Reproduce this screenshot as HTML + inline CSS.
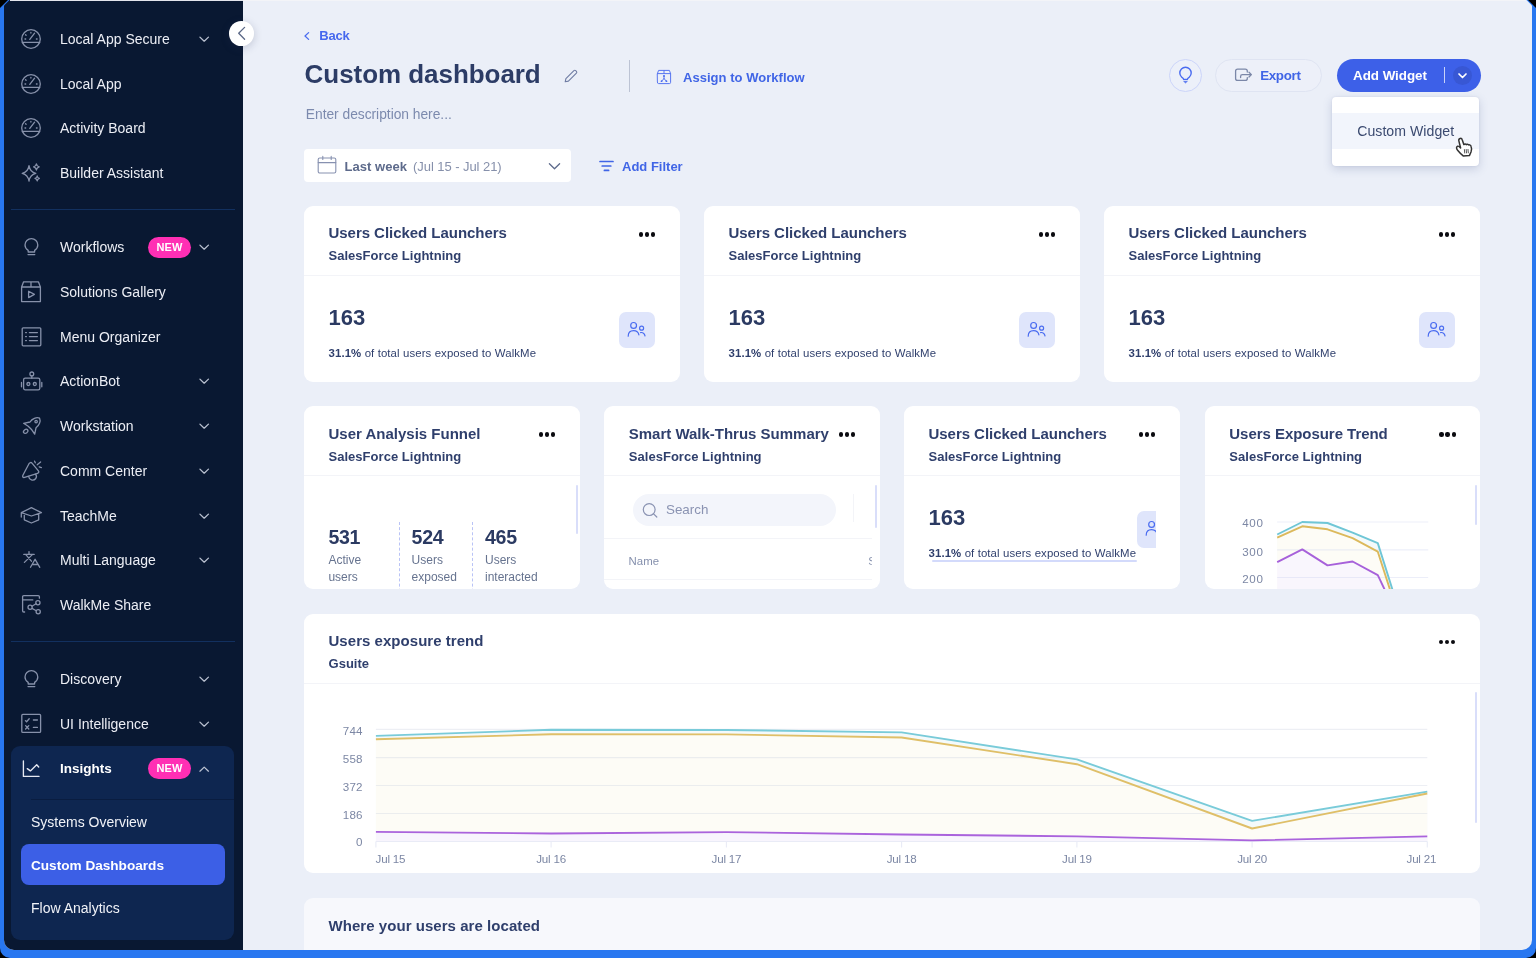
<!DOCTYPE html>
<html>
<head>
<meta charset="utf-8">
<title>Custom dashboard</title>
<style>
*{box-sizing:border-box;margin:0;padding:0}
html,body{width:1536px;height:958px;overflow:hidden;background:#000}
body{font-family:"Liberation Sans",sans-serif;color:#2f3d64;position:relative}
.abs{position:absolute}
#frame{position:absolute;left:0;top:0;width:1536px;height:958px;background:#2877f0;border-radius:0 0 10px 10px;overflow:hidden;clip-path:polygon(8px 0,1528px 0,1536px 8px,1536px 958px,0 958px,0 8px)}
#app{will-change:transform;position:absolute;left:4px;top:0;width:1528px;height:950px;background:#ebeff8;border-radius:0 0 10px 10px;overflow:hidden;clip-path:polygon(5.5px 0,1522.5px 0,1528px 5.5px,1528px 950px,0 950px,0 5.5px)}
#topline{position:absolute;left:6px;top:0;width:1516px;height:1.2px;background:linear-gradient(90deg,#e3e5ec 0,#e3e5ec 233px,#f3f4f8 233px);z-index:50}
/* coordinates inside #app are page-x minus 4 */
#side{position:absolute;left:0;top:0;width:239px;height:950px;background:#091832}
.nav{position:absolute;left:0;width:239px;height:24px;color:#eceef5;font-size:14px;line-height:24px;white-space:nowrap}
.nav .ic{position:absolute;left:16px;top:1px;width:22px;height:22px}
.nav .tx{position:absolute;left:56px;top:0}
.nav .chev{position:absolute;left:195px;top:9px;width:10px;height:7px}
.ic svg,.chev svg{display:block;overflow:visible}
.ic svg *{fill:none;stroke:#8791aa;stroke-width:1.3;stroke-linecap:round;stroke-linejoin:round}
.chev svg *{fill:none;stroke:#b9c0d0;stroke-width:1.4;stroke-linecap:round;stroke-linejoin:round}
.ic.wh svg *{stroke:#e6e9f2;stroke-width:1.35}
.badge{position:absolute;height:21px;width:43px;border-radius:11px;background:#ff2fb4;color:#fff;font-size:11px;font-weight:700;line-height:21px;text-align:center;letter-spacing:.1px}
.sdiv{position:absolute;left:7px;width:224px;height:1px;background:#12305f}
#ins{position:absolute;left:7px;top:745.6px;width:223.4px;height:194.4px;border-radius:9px;background:#0e2650}
.sub{position:absolute;left:27px;color:#f1f3f8;font-size:14px;line-height:20px;white-space:nowrap}
#main{position:absolute;left:-4px;top:0;width:1536px;height:958px}
.blue{color:#3b5bdb}
.card{position:absolute;background:#fff;border-radius:9px;overflow:hidden}
.card .hd{position:absolute;left:0;top:0;right:0;height:70px;border-bottom:1px solid #f1f2f6}
.card .t1{position:absolute;left:24px;top:17px;font-size:15px;font-weight:700;line-height:20px;white-space:nowrap;color:#2f3d64}
.card .t2{position:absolute;left:24px;top:40px;font-size:13px;font-weight:700;line-height:18px;white-space:nowrap;color:#2f3d64}
.dots{position:absolute;top:25px;width:17px;height:5px}
.dots i{position:absolute;top:0;width:4.4px;height:4.4px;border-radius:50%;background:#0b0b10}
.big{position:absolute;font-size:22px;font-weight:700;line-height:26px;color:#2b3a62;letter-spacing:-.2px}
.small{position:absolute;font-size:11.4px;line-height:14px;color:#2f3d64;white-space:nowrap}
.ubox{position:absolute;width:36px;height:36px;border-radius:7px;background:#dfe5fb}
.sb{position:absolute;width:2px;background:#d9defa;border-radius:1px}
</style>
</head>
<body>
<div id="frame">
<div id="app">
<div id="topline"></div>

<svg width="0" height="0" style="position:absolute">
<defs>
<g id="i-gauge"><circle cx="11" cy="11" r="9.3"/><path d="M2.4 14.4H19.6M9.8 11.4L14.6 5.2"/><path d="M5.6 6.7l.5.5M10.9 4.3v.7M5 11h.7M16.4 11h.7" /></g>
<g id="i-spark"><path d="M9 3.6C9.7 8 11.4 10.4 15.8 11.4C11.4 12.4 9.7 14.8 9 19.2C8.3 14.8 6.6 12.4 2.2 11.4C6.6 10.4 8.3 8 9 3.6Z"/><path d="M16.4 1.8C16.7 3.5 17.4 4.4 19.2 4.9C17.4 5.4 16.7 6.3 16.4 8C16.1 6.3 15.4 5.4 13.6 4.9C15.4 4.4 16.1 3.5 16.4 1.8Z"/><path d="M17.2 14C17.4 15.3 18 16 19.4 16.4C18 16.8 17.4 17.5 17.2 18.8C17 17.5 16.4 16.8 15 16.4C16.4 16 17 15.3 17.2 14Z"/></g>
<g id="i-bulb"><path d="M8.2 16V14.4C6.2 13.2 5 11.3 5 9.1A6.4 6.4 0 0 1 17.8 9.1C17.8 11.3 16.6 13.2 14.6 14.4V16Z"/><path d="M8 18.6H14.8"/></g>
<g id="i-box"><path d="M1.6 6H20.4V20.6H1.6ZM1.6 6L3.6 .8H18.4L20.4 6M11 .8V6M8.6 10.2V16.6L14.4 13.4Z"/></g>
<g id="i-list"><rect x="2.2" y="1.8" width="18.6" height="18" rx="1"/><path d="M9.4 6.6H17.4M9.4 10.6H17.4M9.4 14.6H17.4"/><path d="M5.6 6.6h.8M5.6 10.6h.8M5.6 14.6h.8"/></g>
<g id="i-bot"><rect x="3.6" y="8.2" width="16.2" height="11.6" rx="1.6"/><circle cx="11.8" cy="3.9" r="1.9"/><path d="M11.8 5.8V8.2M1.5 12.4V16.8M21.8 12.4V16.8"/><circle cx="8.4" cy="14" r="1.5"/><circle cx="14.8" cy="14" r="1.5"/></g>
<g id="i-rocket"><path d="M19.6 3.2C21 6.2 19.2 10.6 16 12.8L14.7 19.2L11.8 14.8L8.2 11.2L3.6 8.3L10 7C12 3.6 16.6 1.8 19.6 3.2Z"/><circle cx="16.1" cy="6.6" r="1.2"/><ellipse cx="5.7" cy="16.3" rx="2.4" ry="1.8" transform="rotate(-40 5.7 16.3)"/></g>
<g id="i-bell"><path d="M9.1 3.5C9.7 2.3 11.2 2.2 12 3.2L18.4 10.9C19.2 11.9 18.8 12.9 17.6 13.3L4.6 17.4C3 17.9 2.2 16.7 2.9 15.3Z"/><path d="M8.6 16.4C9.2 20 13.2 21.4 15.6 18.8C16.6 17.6 16.6 15.6 15.6 14.2"/><path d="M14.6 1.2L15.3 2.8M17.2 4.8L20.6 2M19.2 6.8L21.4 7.6"/></g>
<g id="i-cap"><path d="M11.4 2.7L21.4 7.7L11.4 11L1.3 7.7ZM4.3 8.8V14.8L11.4 18L18.7 14.8V8.8M1.3 7.7V12"/></g>
<g id="i-lang"><path d="M3.8 5.4H14.2M9 2.6V5.4M12.6 5.4L4.4 13.4M5.8 5.6L11.4 12.2"/><path d="M10.5 18.3L15.1 10.3L19.8 18.3M12.2 15.5H18"/></g>
<g id="i-share"><path d="M19.4 4.2V2.8Q19.4 1.6 18.2 1.6H3.8Q2.6 1.6 2.6 2.8V16.8Q2.6 18 3.8 18H4.6M2.6 5.9H12.8"/><circle cx="17.9" cy="8.7" r="2.1"/><circle cx="10.1" cy="13.3" r="2.1"/><circle cx="18.2" cy="17.7" r="2.1"/><path d="M12 12.2L16 9.8M12 14.4L16.3 16.7"/></g>
<g id="i-ui"><rect x="1.8" y="1.4" width="18.8" height="18" rx="1"/><path d="M5.4 7.6L6.6 8.8L9.2 5.8M13.4 7H17.4M5.6 12.6L8.8 16M8.8 12.6L5.6 16M13.4 14.4H17.4"/></g>
<g id="i-ins"><path d="M3.4 2.8V18.4H19M7.3 10.6L10.4 12.9L16.7 6.7L18.7 9"/></g>
<g id="i-cd"><path d="M1 1.2L5.6 5.6L10.2 1.2"/></g>
<g id="i-cu"><path d="M1 5.6L5.6 1.2L10.2 5.6"/></g>
</defs>
</svg>
<!-- SIDEBAR -->
<div id="side">
<div class="sdiv" style="top:209px"></div>
<div class="sdiv" style="top:641px"></div>
<div class="nav" style="top:27px"><span class="ic"><svg width="22" height="22" viewBox="0 0 22 22"><use href="#i-gauge"/></svg></span><span class="tx">Local App Secure</span><span class="chev"><svg width="10.4" height="6.3" viewBox="0 0 11.2 6.8"><use href="#i-cd"/></svg></span></div>
<div class="nav" style="top:71.7px"><span class="ic"><svg width="22" height="22" viewBox="0 0 22 22"><use href="#i-gauge"/></svg></span><span class="tx">Local App</span></div>
<div class="nav" style="top:116.3px"><span class="ic"><svg width="22" height="22" viewBox="0 0 22 22"><use href="#i-gauge"/></svg></span><span class="tx">Activity Board</span></div>
<div class="nav" style="top:161px"><span class="ic"><svg width="22" height="22" viewBox="0 0 22 22"><use href="#i-spark"/></svg></span><span class="tx">Builder Assistant</span></div>
<div class="nav" style="top:235px"><span class="ic"><svg width="22" height="22" viewBox="0 0 22 22"><use href="#i-bulb"/></svg></span><span class="tx">Workflows</span><span class="badge" style="left:144px;top:1.5px">NEW</span><span class="chev"><svg width="10.4" height="6.3" viewBox="0 0 11.2 6.8"><use href="#i-cd"/></svg></span></div>
<div class="nav" style="top:279.75px"><span class="ic"><svg width="22" height="22" viewBox="0 0 22 22"><use href="#i-box"/></svg></span><span class="tx">Solutions Gallery</span></div>
<div class="nav" style="top:324.5px"><span class="ic"><svg width="22" height="22" viewBox="0 0 22 22"><use href="#i-list"/></svg></span><span class="tx">Menu Organizer</span></div>
<div class="nav" style="top:369.25px"><span class="ic"><svg width="22" height="22" viewBox="0 0 22 22"><use href="#i-bot"/></svg></span><span class="tx">ActionBot</span><span class="chev"><svg width="10.4" height="6.3" viewBox="0 0 11.2 6.8"><use href="#i-cd"/></svg></span></div>
<div class="nav" style="top:414px"><span class="ic"><svg width="22" height="22" viewBox="0 0 22 22"><use href="#i-rocket"/></svg></span><span class="tx">Workstation</span><span class="chev"><svg width="10.4" height="6.3" viewBox="0 0 11.2 6.8"><use href="#i-cd"/></svg></span></div>
<div class="nav" style="top:458.75px"><span class="ic"><svg width="22" height="22" viewBox="0 0 22 22"><use href="#i-bell"/></svg></span><span class="tx">Comm Center</span><span class="chev"><svg width="10.4" height="6.3" viewBox="0 0 11.2 6.8"><use href="#i-cd"/></svg></span></div>
<div class="nav" style="top:503.5px"><span class="ic"><svg width="22" height="22" viewBox="0 0 22 22"><use href="#i-cap"/></svg></span><span class="tx">TeachMe</span><span class="chev"><svg width="10.4" height="6.3" viewBox="0 0 11.2 6.8"><use href="#i-cd"/></svg></span></div>
<div class="nav" style="top:548.25px"><span class="ic"><svg width="22" height="22" viewBox="0 0 22 22"><use href="#i-lang"/></svg></span><span class="tx">Multi Language</span><span class="chev"><svg width="10.4" height="6.3" viewBox="0 0 11.2 6.8"><use href="#i-cd"/></svg></span></div>
<div class="nav" style="top:593px"><span class="ic"><svg width="22" height="22" viewBox="0 0 22 22"><use href="#i-share"/></svg></span><span class="tx">WalkMe Share</span></div>
<div class="nav" style="top:667px"><span class="ic"><svg width="22" height="22" viewBox="0 0 22 22"><use href="#i-bulb"/></svg></span><span class="tx">Discovery</span><span class="chev"><svg width="10.4" height="6.3" viewBox="0 0 11.2 6.8"><use href="#i-cd"/></svg></span></div>
<div class="nav" style="top:711.75px"><span class="ic"><svg width="22" height="22" viewBox="0 0 22 22"><use href="#i-ui"/></svg></span><span class="tx">UI Intelligence</span><span class="chev"><svg width="10.4" height="6.3" viewBox="0 0 11.2 6.8"><use href="#i-cd"/></svg></span></div><div id="ins">
  <div class="abs" style="left:20px;top:53px;width:203.4px;height:1.2px;background:#0a1d40"></div>
  <div class="abs" style="left:10px;top:98.6px;width:204px;height:40.6px;border-radius:8px;background:#3c5fe6"></div>
</div>
<div class="nav" style="top:756.5px;font-weight:700;color:#fff;font-size:13.5px"><span class="ic wh"><svg width="22" height="22" viewBox="0 0 22 22"><use href="#i-ins"/></svg></span><span class="tx">Insights</span><span class="badge" style="left:144px;top:1.5px">NEW</span><span class="chev"><svg width="10.4" height="6.3" viewBox="0 0 11.2 6.8"><use href="#i-cu"/></svg></span></div>
<div class="sub" style="top:812px">Systems Overview</div>
<div class="sub" style="top:855.7px;font-weight:700;color:#fff;font-size:13.6px">Custom Dashboards</div>
<div class="sub" style="top:898px">Flow Analytics</div>
</div>
<!-- collapse button -->
<div class="abs" style="left:225.1px;top:21.3px;width:24.6px;height:24.6px;border-radius:50%;background:#fff;box-shadow:0 2px 8px rgba(40,50,90,.22);z-index:20">
<svg width="24.6" height="24.6" viewBox="0 0 24.6 24.6" style="display:block"><path d="M15.6 6.4L9.7 12.3L15.6 18.2" fill="none" stroke="#5a6786" stroke-width="1.3" stroke-linecap="round" stroke-linejoin="round"/></svg>
</div>
<!-- MAIN -->
<div id="main">
<svg class="abs" style="left:303px;top:30.6px" width="8" height="10" viewBox="0 0 8 10"><path d="M5.6 1.6L2 5L5.6 8.4" fill="none" stroke="#4a6cf0" stroke-width="1.3" stroke-linecap="round" stroke-linejoin="round"/></svg>
<div class="abs" style="left:319.3px;top:26.60px;font-size:13px;line-height:17px;font-weight:700;color:#4668ee;white-space:nowrap;letter-spacing:-0.25px">Back</div>
<div class="abs" style="left:304.6px;top:58.49px;font-size:26px;line-height:32px;font-weight:700;color:#2c3c66;white-space:nowrap;letter-spacing:-0.05px">Custom dashboard</div>
<svg class="abs" style="left:563px;top:68px" width="16" height="16" viewBox="0 0 16 16"><path d="M2.2 13.8L2.9 10.6L10.9 2.6Q11.8 1.8 12.7 2.6L13.4 3.3Q14.2 4.2 13.4 5.1L5.4 13.1Z" fill="none" stroke="#6f7ca3" stroke-width="1.1" stroke-linejoin="round"/></svg>
<div class="abs" style="left:629px;top:60px;width:1px;height:32px;background:#bcc3d4"></div>
<svg class="abs" style="left:656px;top:69px" width="16" height="16" viewBox="0 0 16 16"><g fill="none" stroke="#5876f0" stroke-width="1" stroke-linejoin="round" stroke-linecap="round"><path d="M1.4 4.6L2.6 1.4H13.4L14.6 4.6V13.4Q14.6 14.6 13.4 14.6H2.6Q1.4 14.6 1.4 13.4ZM1.4 4.6H14.6M8 1.4V4.6"/><path d="M8 7V9.6M8 9.6L5.6 12.2M8 9.6L10.4 12.2"/></g><circle cx="8" cy="7" r="1" fill="#4a6cf0"/><circle cx="5.6" cy="12.2" r=".9" fill="#4a6cf0"/><circle cx="10.4" cy="12.2" r=".9" fill="#4a6cf0"/></svg>
<div class="abs" style="left:683px;top:69.00px;font-size:13px;line-height:17px;font-weight:700;color:#4065e6;white-space:nowrap;letter-spacing:0.03px">Assign to Workflow</div>
<div class="abs" style="left:305.8px;top:105.82px;font-size:13.8px;line-height:18px;font-weight:400;color:#7c8aae;white-space:nowrap;letter-spacing:-0.02px">Enter description here...</div>
<div class="abs" style="left:304px;top:149px;width:267px;height:33px;border-radius:4px;background:#fff"></div>
<svg class="abs" style="left:317px;top:155px" width="20" height="20" viewBox="0 0 20 20"><g fill="none" stroke="#8791b0" stroke-width="1.1" stroke-linecap="round"><rect x="1.2" y="3" width="17.6" height="15" rx="1.6"/><path d="M1.2 7.6H18.8M5.8 1.4V4.4M14.2 1.4V4.4"/></g></svg>
<div class="abs" style="left:344.6px;top:157.60px;font-size:13px;line-height:17px;font-weight:700;color:#5d6a8b;white-space:nowrap;letter-spacing:0.03px">Last week</div>
<div class="abs" style="left:413px;top:157.60px;font-size:13px;line-height:17px;font-weight:400;color:#8690ab;white-space:nowrap;letter-spacing:-0.06px">(Jul 15 - Jul 21)</div>
<svg class="abs" style="left:548px;top:162px" width="13" height="9" viewBox="0 0 13 9"><path d="M1.4 1.8L6.5 6.8L11.6 1.8" fill="none" stroke="#5d6a8b" stroke-width="1.3" stroke-linecap="round" stroke-linejoin="round"/></svg>
<svg class="abs" style="left:599px;top:159px" width="15" height="14" viewBox="0 0 15 14"><path d="M1 2.5H14M3.2 7H11.8M5.4 11.4H9.6" fill="none" stroke="#4065e6" stroke-width="1.7" stroke-linecap="round"/></svg>
<div class="abs" style="left:622px;top:157.60px;font-size:13px;line-height:17px;font-weight:700;color:#4065e6;white-space:nowrap;letter-spacing:0.0px">Add Filter</div>
<div class="abs" style="left:1169px;top:59px;width:33px;height:33px;border-radius:50%;border:1px solid #ccd5fa;background:#ecf0f9"></div>
<svg class="abs" style="left:1176px;top:65px" width="19" height="20" viewBox="0 0 19 20"><path d="M7.7 14.4C7.3 13.4 6.5 12.9 5.6 12.1A5.7 5.7 0 1 1 13.4 12.1C12.5 12.9 11.7 13.4 11.3 14.4Z" fill="none" stroke="#4a6cf0" stroke-width="1.4" stroke-linejoin="round"/><path d="M7.5 16.2H11.5L9.5 18.1Z" fill="#4a6cf0" stroke="#4a6cf0" stroke-width=".5" stroke-linejoin="round"/></svg>
<div class="abs" style="left:1214.5px;top:59px;width:107px;height:32.5px;border-radius:17px;border:1px solid #dfe4f2;background:#edf0f9"></div>
<svg class="abs" style="left:1234px;top:66px" width="19" height="18" viewBox="0 0 19 18"><g fill="none" stroke="#7b87a8" stroke-width="1.3" stroke-linecap="round" stroke-linejoin="round"><path d="M13.3 6V5.2Q13.3 3.2 11.3 3.2H3.6Q1.6 3.2 1.6 5.2V12.4Q1.6 14.4 3.6 14.4H11.3Q13.3 14.4 13.3 12.4V11.6"/><path d="M6.6 11.6V10.4Q6.6 8.6 8.4 8.6H17.2M15 6.2L17.4 8.6L15 11"/></g></svg>
<div class="abs" style="left:1260.2px;top:67.06px;font-size:13.4px;line-height:17px;font-weight:700;color:#4065e6;white-space:nowrap;letter-spacing:-0.35px">Export</div>
<div class="abs" style="left:1337px;top:59px;width:143.5px;height:32.5px;border-radius:17px;background:#3d60e8"></div>
<div class="abs" style="left:1353px;top:67.26px;font-size:13.4px;line-height:17px;font-weight:700;color:#fff;white-space:nowrap;letter-spacing:-0.03px">Add Widget</div>
<div class="abs" style="left:1443.5px;top:67px;width:1px;height:16px;background:#c8d2f8"></div>
<div class="abs" style="left:1452.5px;top:65.5px;width:19px;height:19px;border-radius:50%;background:#3857d4"></div>
<svg class="abs" style="left:1456.5px;top:71.5px" width="11" height="8" viewBox="0 0 11 8"><path d="M2 2L5.5 5.5L9 2" fill="none" stroke="#fff" stroke-width="1.7" stroke-linecap="round" stroke-linejoin="round"/></svg>
<div class="card" style="left:304px;top:206.2px;width:375.5px;height:175.5px;background:#fff">
<div class="abs" style="left:24.5px;top:17.00px;font-size:15px;line-height:20px;font-weight:700;color:#2f3f6c;white-space:nowrap;letter-spacing:-0.04px">Users Clicked Launchers</div>
<div class="abs" style="left:24.5px;top:41.20px;font-size:13px;line-height:18px;font-weight:700;color:#2f3f6c;white-space:nowrap;letter-spacing:0.03px">SalesForce Lightning</div>
<div class="abs" style="left:0;top:69px;width:100%;height:1px;background:#f3f4f8"></div>
<div class="dots" style="left:334.5px;top:26.2px"><i style="left:0"></i><i style="left:6.1px"></i><i style="left:12.2px"></i></div>
<div class="abs" style="left:24.5px;top:98.88px;font-size:22px;line-height:26px;font-weight:700;color:#2b3a62;white-space:nowrap;letter-spacing:0px">163</div>
<div class="abs" style="left:24.5px;top:139.95px;font-size:11.4px;line-height:14px;font-weight:400;color:#2f3f6c;white-space:nowrap;letter-spacing:0.11px"><b>31.1%</b> of total users exposed to WalkMe</div>
<div class="ubox" style="left:315px;top:105.5px"><svg width="36" height="36" viewBox="0 0 36 36" style="display:block"><g fill="none" stroke="#4a6cf0" stroke-width="1.2" stroke-linecap="round"><circle cx="14.6" cy="13.4" r="2.9"/><path d="M9.2 24.2C9.2 20.8 11.4 18.6 14.6 18.6C17.4 18.6 19.4 20.2 19.9 22.8"/><circle cx="22.6" cy="16.2" r="2"/><path d="M21.6 20.6C23.8 20.2 25.6 21.4 26 23.8"/></g></svg></div>
</div>
<div class="card" style="left:704px;top:206.2px;width:375.5px;height:175.5px;background:#fff">
<div class="abs" style="left:24.5px;top:17.00px;font-size:15px;line-height:20px;font-weight:700;color:#2f3f6c;white-space:nowrap;letter-spacing:-0.04px">Users Clicked Launchers</div>
<div class="abs" style="left:24.5px;top:41.20px;font-size:13px;line-height:18px;font-weight:700;color:#2f3f6c;white-space:nowrap;letter-spacing:0.03px">SalesForce Lightning</div>
<div class="abs" style="left:0;top:69px;width:100%;height:1px;background:#f3f4f8"></div>
<div class="dots" style="left:334.5px;top:26.2px"><i style="left:0"></i><i style="left:6.1px"></i><i style="left:12.2px"></i></div>
<div class="abs" style="left:24.5px;top:98.88px;font-size:22px;line-height:26px;font-weight:700;color:#2b3a62;white-space:nowrap;letter-spacing:0px">163</div>
<div class="abs" style="left:24.5px;top:139.95px;font-size:11.4px;line-height:14px;font-weight:400;color:#2f3f6c;white-space:nowrap;letter-spacing:0.11px"><b>31.1%</b> of total users exposed to WalkMe</div>
<div class="ubox" style="left:315px;top:105.5px"><svg width="36" height="36" viewBox="0 0 36 36" style="display:block"><g fill="none" stroke="#4a6cf0" stroke-width="1.2" stroke-linecap="round"><circle cx="14.6" cy="13.4" r="2.9"/><path d="M9.2 24.2C9.2 20.8 11.4 18.6 14.6 18.6C17.4 18.6 19.4 20.2 19.9 22.8"/><circle cx="22.6" cy="16.2" r="2"/><path d="M21.6 20.6C23.8 20.2 25.6 21.4 26 23.8"/></g></svg></div>
</div>
<div class="card" style="left:1104px;top:206.2px;width:375.5px;height:175.5px;background:#fff">
<div class="abs" style="left:24.5px;top:17.00px;font-size:15px;line-height:20px;font-weight:700;color:#2f3f6c;white-space:nowrap;letter-spacing:-0.04px">Users Clicked Launchers</div>
<div class="abs" style="left:24.5px;top:41.20px;font-size:13px;line-height:18px;font-weight:700;color:#2f3f6c;white-space:nowrap;letter-spacing:0.03px">SalesForce Lightning</div>
<div class="abs" style="left:0;top:69px;width:100%;height:1px;background:#f3f4f8"></div>
<div class="dots" style="left:334.5px;top:26.2px"><i style="left:0"></i><i style="left:6.1px"></i><i style="left:12.2px"></i></div>
<div class="abs" style="left:24.5px;top:98.88px;font-size:22px;line-height:26px;font-weight:700;color:#2b3a62;white-space:nowrap;letter-spacing:0px">163</div>
<div class="abs" style="left:24.5px;top:139.95px;font-size:11.4px;line-height:14px;font-weight:400;color:#2f3f6c;white-space:nowrap;letter-spacing:0.11px"><b>31.1%</b> of total users exposed to WalkMe</div>
<div class="ubox" style="left:315px;top:105.5px"><svg width="36" height="36" viewBox="0 0 36 36" style="display:block"><g fill="none" stroke="#4a6cf0" stroke-width="1.2" stroke-linecap="round"><circle cx="14.6" cy="13.4" r="2.9"/><path d="M9.2 24.2C9.2 20.8 11.4 18.6 14.6 18.6C17.4 18.6 19.4 20.2 19.9 22.8"/><circle cx="22.6" cy="16.2" r="2"/><path d="M21.6 20.6C23.8 20.2 25.6 21.4 26 23.8"/></g></svg></div>
</div>
<div class="card" style="left:304px;top:406.3px;width:275.6px;height:182.5px;background:#fff">
<div class="abs" style="left:24.5px;top:17.60px;font-size:15px;line-height:20px;font-weight:700;color:#2f3f6c;white-space:nowrap">User Analysis Funnel</div>
<div class="abs" style="left:24.5px;top:41.80px;font-size:13px;line-height:18px;font-weight:700;color:#2f3f6c;white-space:nowrap;letter-spacing:0.03px">SalesForce Lightning</div>
<div class="abs" style="left:0;top:69px;width:100%;height:1px;background:#f3f4f8"></div>
<div class="dots" style="left:234.6px;top:26.2px"><i style="left:0"></i><i style="left:6.1px"></i><i style="left:12.2px"></i></div>
<div class="sb" style="left:271.6px;top:78.3px;height:49.5px"></div>
<div class="abs" style="left:24.4px;top:118.71px;font-size:19.6px;line-height:24px;font-weight:700;color:#2b3a62;white-space:nowrap;letter-spacing:-0.3px">531</div>
<div class="abs" style="left:24.4px;top:146.64px;font-size:12px;line-height:14px;font-weight:400;color:#66738f;white-space:nowrap">Active</div>
<div class="abs" style="left:24.4px;top:163.84px;font-size:12px;line-height:14px;font-weight:400;color:#66738f;white-space:nowrap">users</div>
<div class="abs" style="left:107.6px;top:118.71px;font-size:19.6px;line-height:24px;font-weight:700;color:#2b3a62;white-space:nowrap;letter-spacing:-0.3px">524</div>
<div class="abs" style="left:107.6px;top:146.64px;font-size:12px;line-height:14px;font-weight:400;color:#66738f;white-space:nowrap">Users</div>
<div class="abs" style="left:107.6px;top:163.84px;font-size:12px;line-height:14px;font-weight:400;color:#66738f;white-space:nowrap">exposed</div>
<div class="abs" style="left:181px;top:118.71px;font-size:19.6px;line-height:24px;font-weight:700;color:#2b3a62;white-space:nowrap;letter-spacing:-0.3px">465</div>
<div class="abs" style="left:181px;top:146.64px;font-size:12px;line-height:14px;font-weight:400;color:#66738f;white-space:nowrap">Users</div>
<div class="abs" style="left:181px;top:163.84px;font-size:12px;line-height:14px;font-weight:400;color:#66738f;white-space:nowrap">interacted</div>
<div class="abs" style="left:94.5px;top:115.5px;width:0;height:80px;border-left:1px dashed #b9c3f6"></div>
<div class="abs" style="left:167.8px;top:115.5px;width:0;height:80px;border-left:1px dashed #b9c3f6"></div>
</div>
<div class="card" style="left:604.3px;top:406.3px;width:275.6px;height:182.5px;background:#fff">
<div class="abs" style="left:24.5px;top:17.60px;font-size:15px;line-height:20px;font-weight:700;color:#2f3f6c;white-space:nowrap;letter-spacing:-0.01px">Smart Walk-Thrus Summary</div>
<div class="abs" style="left:24.5px;top:41.80px;font-size:13px;line-height:18px;font-weight:700;color:#2f3f6c;white-space:nowrap;letter-spacing:0.03px">SalesForce Lightning</div>
<div class="abs" style="left:0;top:69px;width:100%;height:1px;background:#f3f4f8"></div>
<div class="dots" style="left:234.6px;top:26.2px"><i style="left:0"></i><i style="left:6.1px"></i><i style="left:12.2px"></i></div>
<div class="sb" style="left:270.6px;top:78.7px;height:43px"></div>
<div class="abs" style="left:28.7px;top:87.7px;width:203px;height:32.3px;border-radius:17px;background:#f3f5fb"></div>
<svg class="abs" style="left:36.7px;top:94.7px" width="18" height="18" viewBox="0 0 18 18"><g fill="none" stroke="#8a93b2" stroke-width="1.2" stroke-linecap="round"><circle cx="8.2" cy="8.6" r="5.9"/><path d="M12.6 12.9L15.8 16"/></g></svg>
<div class="abs" style="left:61.7px;top:94.86px;font-size:13.4px;line-height:18px;font-weight:400;color:#8a93b2;white-space:nowrap">Search</div>
<div class="abs" style="left:248.3px;top:87.7px;width:1px;height:28px;background:#f3f4f8"></div>
<div class="abs" style="left:0;top:131.5px;width:267.3px;height:1px;background:#f3f4f8"></div>
<div class="abs" style="left:0;top:172.9px;width:267.3px;height:1px;background:#f3f4f8"></div>
<div class="abs" style="left:24.3px;top:147.75px;font-size:11.4px;line-height:14px;font-weight:400;color:#8590ad;white-space:nowrap">Name</div>
<div class="abs" style="left:264px;top:146.7px;width:3.3px;height:16px;overflow:hidden"><div style="font-size:11.4px;line-height:14px;color:#8590ad;margin-top:1.2px">S</div></div>
</div>
<div class="card" style="left:904px;top:406.3px;width:275.6px;height:182.5px;background:#fff">
<div class="abs" style="left:24.5px;top:17.60px;font-size:15px;line-height:20px;font-weight:700;color:#2f3f6c;white-space:nowrap;letter-spacing:-0.04px">Users Clicked Launchers</div>
<div class="abs" style="left:24.5px;top:41.80px;font-size:13px;line-height:18px;font-weight:700;color:#2f3f6c;white-space:nowrap;letter-spacing:0.03px">SalesForce Lightning</div>
<div class="abs" style="left:0;top:69px;width:100%;height:1px;background:#f3f4f8"></div>
<div class="dots" style="left:234.6px;top:26.2px"><i style="left:0"></i><i style="left:6.1px"></i><i style="left:12.2px"></i></div>
<div class="abs" style="left:24.5px;top:98.88px;font-size:22px;line-height:26px;font-weight:700;color:#2b3a62;white-space:nowrap;letter-spacing:0px">163</div>
<div class="abs" style="left:24.5px;top:139px;width:208.2px;height:13.9px;overflow:hidden"><div style="font-size:11.4px;line-height:14px;color:#2f3f6c;white-space:nowrap;letter-spacing:.11px;margin-top:0.95px"><b>31.1%</b> of total users exposed to WalkMe</div></div>
<div class="abs" style="left:27.7px;top:153.9px;width:205px;height:1.6px;border-radius:1px;background:#d3dafb"></div>
<div class="abs" style="left:233.2px;top:104.7px;width:18.8px;height:36.7px;overflow:hidden"><div class="ubox" style="left:0;top:0;height:36.7px"><svg width="36" height="36" viewBox="0 0 36 36" style="display:block"><g fill="none" stroke="#4a6cf0" stroke-width="1.2" stroke-linecap="round"><circle cx="14.6" cy="13.4" r="2.9"/><path d="M9.2 24.2C9.2 20.8 11.4 18.6 14.6 18.6C17.4 18.6 19.4 20.2 19.9 22.8"/><circle cx="22.6" cy="16.2" r="2"/><path d="M21.6 20.6C23.8 20.2 25.6 21.4 26 23.8"/></g></svg></div></div>
</div>
<div class="card" style="left:1204.8px;top:406.3px;width:275.6px;height:182.5px;background:#fff">
<div class="abs" style="left:24.5px;top:17.60px;font-size:15px;line-height:20px;font-weight:700;color:#2f3f6c;white-space:nowrap;letter-spacing:-0.04px">Users Exposure Trend</div>
<div class="abs" style="left:24.5px;top:41.80px;font-size:13px;line-height:18px;font-weight:700;color:#2f3f6c;white-space:nowrap;letter-spacing:0.03px">SalesForce Lightning</div>
<div class="abs" style="left:0;top:69px;width:100%;height:1px;background:#f3f4f8"></div>
<div class="dots" style="left:234.6px;top:26.2px"><i style="left:0"></i><i style="left:6.1px"></i><i style="left:12.2px"></i></div>
<div class="sb" style="left:270.6px;top:78.3px;height:40.3px"></div>
<svg class="abs" style="left:0;top:0" width="275.6" height="182.5" viewBox="0 0 275.6 182.5"><polygon points="72.2,128.5 97.3,116.0 122.5,117.0 147.6,126.6 172.8,137.1 197.9,216.7 197.9,293.7 72.2,293.7" fill="#f4fafb"/><polygon points="72.2,131.7 97.3,120.3 122.5,123.3 147.6,132.1 172.8,145.7 197.9,223.7 197.9,293.7 72.2,293.7" fill="#fdfcf6"/><polygon points="72.2,156.1 97.3,143.4 122.5,159.4 147.6,155.5 172.8,169.2 197.9,221.7 197.9,293.7 72.2,293.7" fill="#f9f6fd"/><path d="M72.2 116.0H223.2" stroke="rgba(205,210,240,.38)" stroke-width="1.2"/><path d="M72.2 143.8H223.2" stroke="rgba(205,210,240,.38)" stroke-width="1.2"/><path d="M72.2 171.5H223.2" stroke="rgba(205,210,240,.38)" stroke-width="1.2"/><polyline points="72.2,128.5 97.3,116.0 122.5,117.0 147.6,126.6 172.8,137.1 197.9,216.7" fill="none" stroke="#6fc6d6" stroke-width="1.9" stroke-linejoin="round"/><polyline points="72.2,131.7 97.3,120.3 122.5,123.3 147.6,132.1 172.8,145.7 197.9,223.7" fill="none" stroke="#dcb95c" stroke-width="1.9" stroke-linejoin="round"/><polyline points="72.2,156.1 97.3,143.4 122.5,159.4 147.6,155.5 172.8,169.2 197.9,221.7" fill="none" stroke="#a761da" stroke-width="1.9" stroke-linejoin="round"/></svg>
<div class="abs" style="left:-141.2px;width:200px;text-align:right;top:109.88px;font-size:11.6px;line-height:14px;font-weight:400;color:#7c87a4;white-space:nowrap;letter-spacing:0.7px">400</div>
<div class="abs" style="left:-141.2px;width:200px;text-align:right;top:138.38px;font-size:11.6px;line-height:14px;font-weight:400;color:#7c87a4;white-space:nowrap;letter-spacing:0.7px">300</div>
<div class="abs" style="left:-141.2px;width:200px;text-align:right;top:165.98px;font-size:11.6px;line-height:14px;font-weight:400;color:#7c87a4;white-space:nowrap;letter-spacing:0.7px">200</div>
</div>
<div class="card" style="left:304px;top:613.7px;width:1175.6px;height:259.5px;background:#fff">
<div class="abs" style="left:24.5px;top:17.00px;font-size:15px;line-height:20px;font-weight:700;color:#2f3f6c;white-space:nowrap;letter-spacing:0.04px">Users exposure trend</div>
<div class="abs" style="left:24.5px;top:41.20px;font-size:13px;line-height:18px;font-weight:700;color:#2f3f6c;white-space:nowrap;letter-spacing:0.03px">Gsuite</div>
<div class="abs" style="left:0;top:69px;width:100%;height:1px;background:#f3f4f8"></div>
<div class="dots" style="left:1134.6px;top:26.2px"><i style="left:0"></i><i style="left:6.1px"></i><i style="left:12.2px"></i></div>
<div class="sb" style="left:1171px;top:77.9px;height:131.8px"></div>
<svg class="abs" style="left:0;top:0" width="1175.6" height="259.5" viewBox="0 0 1175.6 259.5"><polygon points="71.9,121.9 247.1,115.8 422.4,116.0 597.6,118.4 772.9,145.4 948.1,206.9 1123.3,177.6 1123.3,227.5 71.9,227.5" fill="#f4fafb"/><polygon points="71.9,125.3 247.1,120.3 422.4,120.4 597.6,123.5 772.9,150.2 948.1,214.5 1123.3,179.5 1123.3,227.5 71.9,227.5" fill="#fdfcf6"/><polygon points="71.9,217.9 247.1,219.5 422.4,218.1 597.6,220.5 772.9,222.4 948.1,226.4 1123.3,222.4 1123.3,227.5 71.9,227.5" fill="#f8f5fd"/><path d="M71.9 115.4H1123.3" stroke="rgba(200,205,220,.32)" stroke-width="1.1"/><path d="M71.9 143.6H1123.3" stroke="rgba(200,205,220,.32)" stroke-width="1.1"/><path d="M71.9 171.5H1123.3" stroke="rgba(200,205,220,.32)" stroke-width="1.1"/><path d="M71.9 199.5H1123.3" stroke="rgba(200,205,220,.32)" stroke-width="1.1"/><path d="M71.9 227.5H1123.3" stroke="#e9ebf6" stroke-width="1.1"/><path d="M71.9 227.5V233.5" stroke="#e9ebf6" stroke-width="1.1"/><path d="M247.1 227.5V233.5" stroke="#e9ebf6" stroke-width="1.1"/><path d="M422.4 227.5V233.5" stroke="#e9ebf6" stroke-width="1.1"/><path d="M597.6 227.5V233.5" stroke="#e9ebf6" stroke-width="1.1"/><path d="M772.9 227.5V233.5" stroke="#e9ebf6" stroke-width="1.1"/><path d="M948.1 227.5V233.5" stroke="#e9ebf6" stroke-width="1.1"/><path d="M1123.3 227.5V233.5" stroke="#e9ebf6" stroke-width="1.1"/><polyline points="71.9,121.9 247.1,115.8 422.4,116.0 597.6,118.4 772.9,145.4 948.1,206.9 1123.3,177.6" fill="none" stroke="#79cbd9" stroke-width="1.9" stroke-linejoin="round"/><polyline points="71.9,125.3 247.1,120.3 422.4,120.4 597.6,123.5 772.9,150.2 948.1,214.5 1123.3,179.5" fill="none" stroke="#dfbf68" stroke-width="1.9" stroke-linejoin="round"/><polyline points="71.9,217.9 247.1,219.5 422.4,218.1 597.6,220.5 772.9,222.4 948.1,226.4 1123.3,222.4" fill="none" stroke="#aa63dc" stroke-width="1.9" stroke-linejoin="round"/></svg>
<div class="abs" style="left:-141.4px;width:200px;text-align:right;top:110.08px;font-size:11.6px;line-height:14px;font-weight:400;color:#7c87a4;white-space:nowrap;letter-spacing:0.15px">744</div>
<div class="abs" style="left:-141.4px;width:200px;text-align:right;top:138.38px;font-size:11.6px;line-height:14px;font-weight:400;color:#7c87a4;white-space:nowrap;letter-spacing:0.15px">558</div>
<div class="abs" style="left:-141.4px;width:200px;text-align:right;top:166.08px;font-size:11.6px;line-height:14px;font-weight:400;color:#7c87a4;white-space:nowrap;letter-spacing:0.15px">372</div>
<div class="abs" style="left:-141.4px;width:200px;text-align:right;top:194.28px;font-size:11.6px;line-height:14px;font-weight:400;color:#7c87a4;white-space:nowrap;letter-spacing:0.15px">186</div>
<div class="abs" style="left:-141.4px;width:200px;text-align:right;top:221.78px;font-size:11.6px;line-height:14px;font-weight:400;color:#7c87a4;white-space:nowrap;letter-spacing:0.15px">0</div>
<div class="abs" style="left:71.6px;top:237.88px;font-size:11.6px;line-height:14px;font-weight:400;color:#7c87a4;white-space:nowrap;letter-spacing:-0.22px">Jul 15</div>
<div class="abs" style="left:147.1px;width:200px;text-align:center;top:237.88px;font-size:11.6px;line-height:14px;font-weight:400;color:#7c87a4;white-space:nowrap;letter-spacing:-0.22px">Jul 16</div>
<div class="abs" style="left:322.4px;width:200px;text-align:center;top:237.88px;font-size:11.6px;line-height:14px;font-weight:400;color:#7c87a4;white-space:nowrap;letter-spacing:-0.22px">Jul 17</div>
<div class="abs" style="left:497.6px;width:200px;text-align:center;top:237.88px;font-size:11.6px;line-height:14px;font-weight:400;color:#7c87a4;white-space:nowrap;letter-spacing:-0.22px">Jul 18</div>
<div class="abs" style="left:672.9px;width:200px;text-align:center;top:237.88px;font-size:11.6px;line-height:14px;font-weight:400;color:#7c87a4;white-space:nowrap;letter-spacing:-0.22px">Jul 19</div>
<div class="abs" style="left:848.1px;width:200px;text-align:center;top:237.88px;font-size:11.6px;line-height:14px;font-weight:400;color:#7c87a4;white-space:nowrap;letter-spacing:-0.22px">Jul 20</div>
<div class="abs" style="left:932.2px;width:200px;text-align:right;top:237.88px;font-size:11.6px;line-height:14px;font-weight:400;color:#7c87a4;white-space:nowrap;letter-spacing:-0.22px">Jul 21</div>
</div>
<div class="card" style="left:304px;top:898.1px;width:1175.6px;height:80px;background:#f7f8fc">
<div class="abs" style="left:24.5px;top:18.00px;font-size:15px;line-height:20px;font-weight:700;color:#2f3f6c;white-space:nowrap;letter-spacing:0.05px">Where your users are located</div>
</div>
<div class="abs" style="left:1332.4px;top:97px;width:147px;height:68.8px;border-radius:4px;background:#fff;box-shadow:0 3px 10px rgba(70,85,140,.22),0 0 2px rgba(70,85,140,.12)"></div>
<div class="abs" style="left:1332.4px;top:113.2px;width:147px;height:35.8px;background:#f2f5fc"></div>
<div class="abs" style="left:1357.2px;top:122.31px;font-size:14.1px;line-height:18px;font-weight:400;color:#3b4a70;white-space:nowrap;letter-spacing:0.05px">Custom Widget</div>
<svg class="abs" style="left:1454px;top:136px" width="20" height="22" viewBox="0 0 20 22"><path d="M6.3 2.4C7.4 2.2 8 3 8.3 4L9.8 8.6C10.6 7.8 11.6 7.8 12.2 8.6C13 7.9 14.2 8.1 14.7 9C15.6 8.6 16.8 9.2 17 10.2C17.8 12 17.8 14 17 16L15.4 19.6L9.2 19.9C7.4 18.4 5.4 16.4 3.6 14.2C2.2 12.6 2.2 10.8 3.6 10.2C4.6 9.8 5.6 10.8 6.6 12L4.8 4.6C4.6 3.4 5.2 2.6 6.3 2.4Z" fill="#fff" stroke="#333" stroke-width="1.5" stroke-linejoin="round"/><path d="M10.4 13.6L10.7 17M12.2 13.5L12.5 16.9M14 13.4L14.3 16.8" stroke="#444" stroke-width=".9" stroke-linecap="round"/></svg>
</div>

</div>
</div>
</body>
</html>
